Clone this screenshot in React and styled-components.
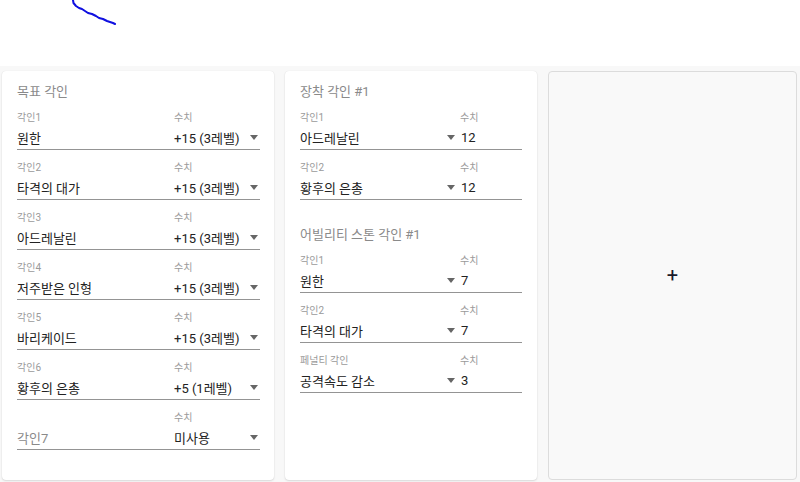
import React from 'react'
import styled, { createGlobalStyle } from 'styled-components'

const Global = createGlobalStyle`
  html, body {
    margin: 0;
    padding: 0;
    background: #ffffff;
  }
  body {
    font-family: Roboto, "Noto Sans CJK KR", "Noto Sans", sans-serif;
    color: #222;
  }
`

const Sketch = styled.div`
  height: 66px;
  background: #ffffff;
  svg {
    display: block;
  }
`

const Board = styled.div`
  display: flex;
  align-items: stretch;
  height: 416px;
  box-sizing: border-box;
  padding: 5px 0 2px 2px;
  background: #f8f8f8;
`

const Card = styled.div`
  box-sizing: border-box;
  width: ${p => p.$w}px;
  margin-left: ${p => p.$ml || 0}px;
  padding: 13px ${p => p.$pr}px 0 ${p => p.$pl}px;
  background: #ffffff;
  border-radius: 4px;
  box-shadow: 0 1px 2px rgba(0, 0, 0, 0.12), 0 0 1px rgba(0, 0, 0, 0.1);
`

const EmptyCard = styled.div`
  box-sizing: border-box;
  width: 249px;
  margin-left: 11px;
  display: flex;
  align-items: center;
  justify-content: center;
  background: #f9f9f9;
  border: 1px solid #dcdcdc;
  border-radius: 4px;
  font-size: 20px;
  color: #1a1a2a;
  padding-bottom: 2px;
`

const Title = styled.div`
  height: 16px;
  line-height: 16px;
  font-size: 13px;
  color: #8a8a8a;
  margin-top: ${p => p.$mt || 0}px;
`

const Row = styled.div`
  display: grid;
  grid-template-columns: ${p => p.$cols};
  margin-top: 11px;
  padding-bottom: 1px;
  border-bottom: 1px solid #949494;
`

const Field = styled.div`
  display: flex;
  flex-direction: column;
`

const Label = styled.div`
  height: 14px;
  line-height: 14px;
  font-size: 10px;
  color: #9a9a9a;
  white-space: nowrap;
  padding-left: ${p => p.$pl || 0}px;
`

const Value = styled.div`
  display: flex;
  align-items: center;
  height: 20px;
  margin-top: 2px;
  margin-bottom: 1px;
  font-size: 13px;
  color: ${p => (p.$placeholder ? '#8a8a8a' : '#222')};
  white-space: nowrap;
`

const SelectValue = styled(Value)`
  justify-content: space-between;
  padding-right: 2px;
`

const Arrow = styled.span`
  display: inline-block;
  width: 0;
  height: 0;
  border-left: 4px solid transparent;
  border-right: 4px solid transparent;
  border-top: 5px solid #666;
  margin-right: ${p => p.$mr || 0}px;
`

const wide = [
  ['각인1', '원한', '+15 (3레벨)'],
  ['각인2', '타격의 대가', '+15 (3레벨)'],
  ['각인3', '아드레날린', '+15 (3레벨)'],
  ['각인4', '저주받은 인형', '+15 (3레벨)'],
  ['각인5', '바리케이드', '+15 (3레벨)'],
  ['각인6', '황후의 은총', '+5 (1레벨)'],
]

const equip = [
  ['각인1', '아드레날린', '12'],
  ['각인2', '황후의 은총', '12'],
]

const stone = [
  ['각인1', '원한', '7'],
  ['각인2', '타격의 대가', '7'],
  ['페널티 각인', '공격속도 감소', '3'],
]

const GoalRow = ({ label, name, level, placeholder }) => (
  <Row $cols="157px 1fr">
    <Field>
      <Label>{label}</Label>
      <Value $placeholder={placeholder}>{name}</Value>
    </Field>
    <Field>
      <Label>수치</Label>
      <SelectValue>
        {level}
        <Arrow />
      </SelectValue>
    </Field>
  </Row>
)

const SmallRow = ({ label, name, num }) => (
  <Row $cols="147px 1fr">
    <Field>
      <Label>{label}</Label>
      <Value>{name}</Value>
    </Field>
    <Field>
      <Label $pl={13}>수치</Label>
      <Value>
        <Arrow $mr={6} />
        {num}
      </Value>
    </Field>
  </Row>
)

export default function App() {
  return (
    <>
      <Global />
      <Sketch>
        <svg width="800" height="66">
          <path
            d="M73 0 L73.5 3 L76 6 L79 8 L82 9 L85 11 L88 13 L92 14 L96 16 L99 18 L103 19 L107 21 L110 22 L113 23 L115 24"
            fill="none"
            stroke="#1010e0"
            strokeWidth="2"
            strokeLinecap="round"
            strokeLinejoin="round"
          />
        </svg>
      </Sketch>
      <Board>
        <Card $w={272} $pl={15} $pr={14}>
          <Title>목표 각인</Title>
          {wide.map(([l, n, v]) => (
            <GoalRow key={l} label={l} name={n} level={v} />
          ))}
          <GoalRow label="" name="각인7" level="미사용" placeholder />
        </Card>
        <Card $w={252} $ml={11} $pl={15} $pr={15}>
          <Title>장착 각인 #1</Title>
          {equip.map(([l, n, v]) => (
            <SmallRow key={l} label={l} name={n} num={v} />
          ))}
          <Title $mt={27}>어빌리티 스톤 각인 #1</Title>
          {stone.map(([l, n, v]) => (
            <SmallRow key={l} label={l} name={n} num={v} />
          ))}
        </Card>
        <EmptyCard>+</EmptyCard>
      </Board>
    </>
  )
}
